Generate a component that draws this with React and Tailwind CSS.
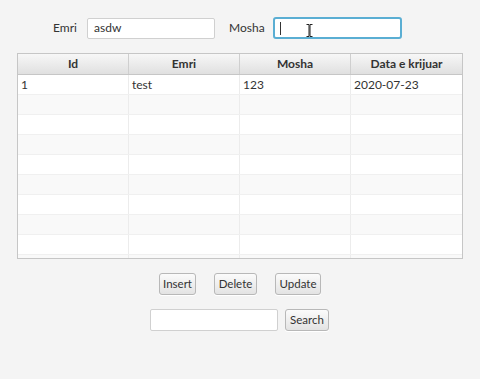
export default function App() {
  const cols = ["Id", "Emri", "Mosha", "Data e krijuar"];
  const rows = [["1", "test", "123", "2020-07-23"]];
  const blank = Array.from({ length: 10 }, (_, i) => rows[i] || ["", "", "", ""]);

  const btn =
    "flex h-[22px] items-center justify-center rounded-[3px] border border-[#b8b8b8] bg-gradient-to-b from-[#fbfbfb] to-[#e3e3e3] text-[11.5px] text-[#333] shadow-[0_1px_0_#fff]";

  return (
    <div
      className="h-[379px] w-[480px] bg-[#f4f4f4] text-[12px] text-[#333]"
      style={{ fontFamily: 'Lato, "Open Sans", sans-serif' }}
    >
      <div className="flex items-center pl-[53px] pt-[17px]">
        <span className="w-[34px]">Emri</span>
        <div className="flex h-[21px] w-[128px] items-center rounded-[2px] border border-[#d0d0d0] bg-white px-[6px]">
          asdw
        </div>
        <span className="ml-[14px] w-[44px]">Mosha</span>
        <div className="relative flex h-[22px] w-[129px] items-center rounded-[3px] border-2 border-[#5aaed3] bg-white px-[5px]">
          <span className="h-[13px] w-px bg-[#333]" />
          <svg className="absolute left-[31px] top-[5px]" width="7" height="13" viewBox="0 0 7 13">
            <path d="M0.5 0.5h2.5v12h-2.5M6.5 0.5h-2.5v12h2.5" fill="none" stroke="#222" strokeWidth="1" />
          </svg>
        </div>
      </div>

      <div className="ml-[17px] mt-[14px] h-[206px] w-[446px] overflow-hidden border border-[#c6c6c6] bg-white">
        <div className="grid h-[21px] grid-cols-4 border-b border-[#c6c6c6] bg-gradient-to-b from-[#f7f7f7] to-[#e0e0e0]">
          {cols.map((c, i) => (
            <div
              key={c}
              className={`flex items-center justify-center font-bold ${i < 3 ? "border-r border-[#cfcfcf]" : ""}`}
            >
              {c}
            </div>
          ))}
        </div>
        {blank.map((r, ri) => (
          <div
            key={ri}
            className={`grid h-[20px] grid-cols-4 border-b border-[#f0f0f0] ${ri % 2 ? "bg-[#f9f9f9]" : "bg-white"}`}
          >
            {r.map((v, ci) => (
              <div
                key={ci}
                className={`flex items-center px-[3px] ${ci < 3 ? "border-r border-[#ececec]" : ""}`}
              >
                {v}
              </div>
            ))}
          </div>
        ))}
      </div>

      <div className="ml-[159px] mt-[14px] flex gap-[18px]">
        <button className={`${btn} w-[37px]`}>Insert</button>
        <button className={`${btn} w-[43px]`}>Delete</button>
        <button className={`${btn} w-[46px]`}>Update</button>
      </div>

      <div className="ml-[150px] mt-[14px] flex gap-[7px]">
        <div className="h-[22px] w-[128px] rounded-[2px] border border-[#d0d0d0] bg-white" />
        <button className={`${btn} w-[44px]`}>Search</button>
      </div>
    </div>
  );
}
